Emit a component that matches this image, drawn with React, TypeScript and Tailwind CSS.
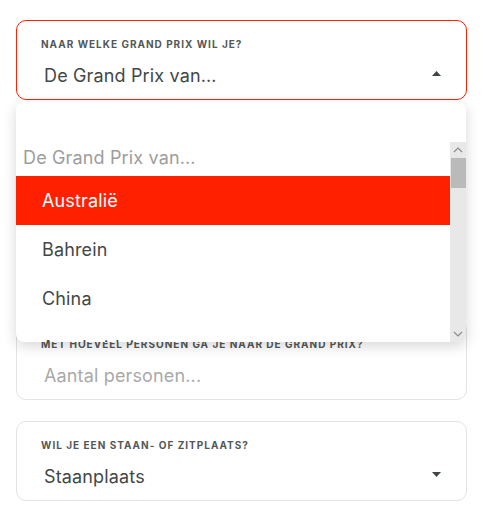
const font = { fontFamily: 'Inter, "Open Sans", sans-serif' };

function Caret({ up }: { up?: boolean }) {
  return (
    <svg width="9" height="5" viewBox="0 0 9 5" className="block">
      {up ? <path d="M0 5 L4.5 0 L9 5 Z" fill="#3f4644" /> : <path d="M0 0 L4.5 5 L9 0 Z" fill="#3f4644" />}
    </svg>
  );
}

function Field({
  label,
  value,
  placeholder,
  caret,
  active,
  className = '',
}: {
  label: string;
  value: string;
  placeholder?: boolean;
  caret?: 'up' | 'down';
  active?: boolean;
  className?: string;
}) {
  return (
    <div
      className={`h-[80px] rounded-[10px] border bg-white flex flex-col pt-[16.5px] pl-[24px] pr-[25px] ${
        active ? 'border-[#ff2000]' : 'border-[#e3e3e3]'
      } ${className}`}
    >
      <div className="h-[12px] leading-[12px] text-[10px] font-bold tracking-[1px] text-[#535857] uppercase whitespace-nowrap">
        {label}
      </div>
      <div className="mt-[14px] h-[24px] flex items-center justify-between pl-[3px]">
        <span
          className={`text-[18px] leading-[24px] tracking-[0.15px] ${placeholder ? 'text-[#a9a9a9]' : 'text-[#424847]'}`}
        >
          {value}
        </span>
        {caret && (
          <span className="-translate-y-[2px]">
            <Caret up={caret === 'up'} />
          </span>
        )}
      </div>
    </div>
  );
}

function ChevronUp() {
  return (
    <svg width="10" height="6" viewBox="0 0 10 6">
      <path d="M1 5 L5 1 L9 5" stroke="#8a8a8a" strokeWidth="1.1" fill="none" />
    </svg>
  );
}
function ChevronDown() {
  return (
    <svg width="10" height="6" viewBox="0 0 10 6">
      <path d="M1 1 L5 5 L9 1" stroke="#8a8a8a" strokeWidth="1.1" fill="none" />
    </svg>
  );
}

const option = 'h-[49px] flex items-center pl-[26px] text-[18px] leading-[24px] tracking-[0.15px]';

export default function App() {
  return (
    <div className="relative w-[483px] h-[515px] bg-white" style={font}>
      <div className="px-[16px] pt-[20px] flex flex-col">
        <Field label="Naar welke Grand Prix wil je?" value="De Grand Prix van..." caret="up" active />
        <Field
          className="mt-[220px]"
          label="Met hoeveel personen ga je naar de Grand Prix?"
          value="Aantal personen..."
          placeholder
        />
        <Field className="mt-[21px]" label="Wil je een staan- of zitplaats?" value="Staanplaats" caret="down" />
      </div>

      {/* open dropdown menu */}
      <div className="absolute left-[16px] top-[102px] w-[450px] h-[240px] bg-white rounded-[8px] shadow-[0_4px_14px_rgba(0,0,0,0.16)] overflow-hidden">
        <div className="h-[40px]" />
        <div className="flex h-[200px]">
          <div className="flex-1 overflow-hidden">
            <div className="h-[34px] pt-[4px] pl-[7px] text-[18px] leading-[24px] tracking-[0.15px] text-[#9d9d9d]">
              De Grand Prix van...
            </div>
            <div className={`${option} bg-[#ff2000] text-white`}>Australië</div>
            <div className={`${option} text-[#424847]`}>Bahrein</div>
            <div className={`${option} text-[#424847]`}>China</div>
            <div className={`${option} text-[#424847]`}>Azerbeidzjan</div>
          </div>
          <div className="w-[16px] bg-[#e8e8e8] flex flex-col">
            <div className="h-[16px] flex items-center justify-center">
              <ChevronUp />
            </div>
            <div className="mx-[0.5px] h-[30px] bg-[#bababa]" />
            <div className="flex-1" />
            <div className="h-[16px] flex items-center justify-center">
              <ChevronDown />
            </div>
          </div>
        </div>
      </div>
    </div>
  );
}
